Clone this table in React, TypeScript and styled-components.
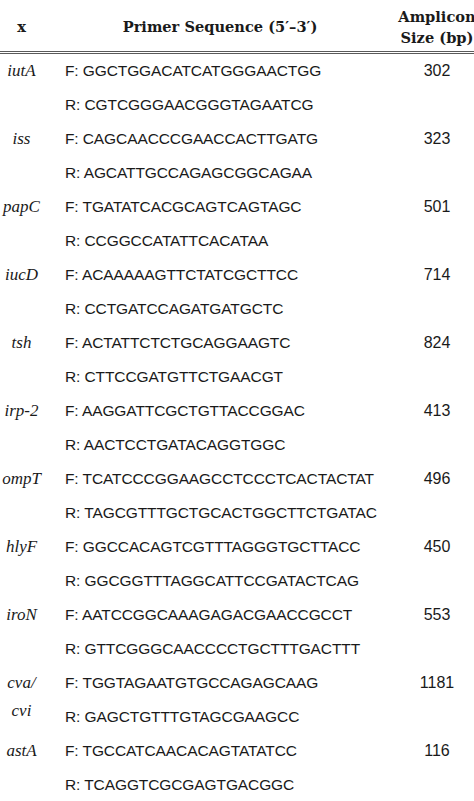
import React from "react";
import styled, { createGlobalStyle } from "styled-components";

const Global = createGlobalStyle`
  html, body { margin: 0; padding: 0; background: #fff; overflow: hidden; }
  body { width: 474px; height: 801px; }
`;

const Table = styled.div`
  width: 474px;
  color: #1a1a1a;
  overflow: hidden;
`;

const cols = "43px 22px 310px 25px 74px";

const HeaderRow = styled.div`
  display: grid;
  grid-template-columns: ${cols};
  height: 51px;
  border-bottom: 3px double #5a5a5a;
  align-items: center;
  font-family: "DejaVu Serif", serif;
  font-weight: 700;
  font-size: 14.6px;
`;

const HeadCell = styled.div<{ $col: number; $lh?: number }>`
  grid-column: ${(p) => p.$col};
  white-space: nowrap;
  line-height: ${(p) => p.$lh ?? 20}px;
  padding-top: 2px;
  display: flex;
  flex-direction: column;
  align-items: center;
`;

const Group = styled.div`
  display: grid;
  grid-template-columns: ${cols};
  grid-template-rows: 34px 34px;
`;

const Gene = styled.div`
  grid-column: 1;
  grid-row: 1 / span 2;
  text-align: center;
  font-family: "Liberation Serif", serif;
  font-style: italic;
  font-size: 17px;
  line-height: 28px;
  padding-top: 3px;
  white-space: pre-line;
`;

const Seq = styled.div<{ $row: number }>`
  grid-column: 3 / span 2;
  grid-row: ${(p) => p.$row};
  display: flex;
  align-items: center;
  font-family: "Liberation Sans", sans-serif;
  font-size: 15.5px;
  white-space: nowrap;
  letter-spacing: -0.1px;
`;

const Size = styled.div`
  grid-column: 5;
  grid-row: 1;
  display: flex;
  align-items: center;
  justify-content: center;
  font-family: "Liberation Sans", sans-serif;
  font-size: 16px;
`;

const rows = [
  { g: "iutA", f: "GGCTGGACATCATGGGAACTGG", r: "CGTCGGGAACGGGTAGAATCG", s: "302" },
  { g: "iss", f: "CAGCAACCCGAACCACTTGATG", r: "AGCATTGCCAGAGCGGCAGAA", s: "323" },
  { g: "papC", f: "TGATATCACGCAGTCAGTAGC", r: "CCGGCCATATTCACATAA", s: "501" },
  { g: "iucD", f: "ACAAAAAGTTCTATCGCTTCC", r: "CCTGATCCAGATGATGCTC", s: "714" },
  { g: "tsh", f: "ACTATTCTCTGCAGGAAGTC", r: "CTTCCGATGTTCTGAACGT", s: "824" },
  { g: "irp-2", f: "AAGGATTCGCTGTTACCGGAC", r: "AACTCCTGATACAGGTGGC", s: "413" },
  { g: "ompT", f: "TCATCCCGGAAGCCTCCCTCACTACTAT", r: "TAGCGTTTGCTGCACTGGCTTCTGATAC", s: "496" },
  { g: "hlyF", f: "GGCCACAGTCGTTTAGGGTGCTTACC", r: "GGCGGTTTAGGCATTCCGATACTCAG", s: "450" },
  { g: "iroN", f: "AATCCGGCAAAGAGACGAACCGCCT", r: "GTTCGGGCAACCCCTGCTTTGACTTT", s: "553" },
  { g: "cva/\ncvi", f: "TGGTAGAATGTGCCAGAGCAAG", r: "GAGCTGTTTGTAGCGAAGCC", s: "1181" },
  { g: "astA", f: "TGCCATCAACACAGTATATCC", r: "TCAGGTCGCGAGTGACGGC", s: "116" },
];

export default function App() {
  return (
    <>
      <Global />
      <Table>
        <HeaderRow>
          <HeadCell $col={1}>x</HeadCell>
          <HeadCell $col={3}>Primer Sequence (5′–3′)</HeadCell>
          <HeadCell $col={5} $lh={21}>
            <span>Amplicon</span>
            <span>Size (bp)</span>
          </HeadCell>
        </HeaderRow>
        {rows.map((r) => (
          <Group key={r.g}>
            <Gene>{r.g}</Gene>
            <Seq $row={1}>F: {r.f}</Seq>
            <Size>{r.s}</Size>
            <Seq $row={2}>R: {r.r}</Seq>
          </Group>
        ))}
      </Table>
    </>
  );
}
